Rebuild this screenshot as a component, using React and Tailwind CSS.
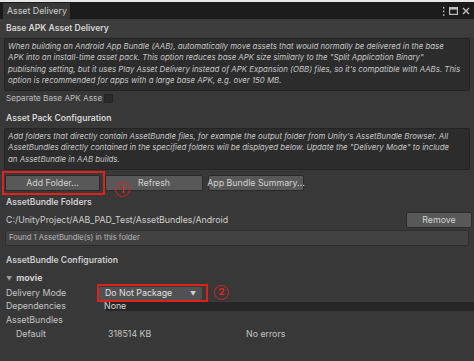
import React from "react";

const helpLines1 = [
  "When building an Android App Bundle (AAB), automatically move assets that would normally be delivered in the base",
  'APK into an install-time asset pack. This option reduces base APK size similarly to the "Split Application Binary"',
  "publishing setting, but it uses Play Asset Delivery instead of APK Expansion (OBB) files, so it's compatible with AABs. This",
  "option is recommended for apps with a large base APK, e.g. over 150 MB.",
];

const helpLines2 = [
  "Add folders that directly contain AssetBundle files, for example the output folder from Unity's AssetBundle Browser. All",
  'AssetBundles directly contained in the specified folders will be displayed below. Update the "Delivery Mode" to include',
  "an AssetBundle in AAB builds.",
];

const Btn = ({ children, className = "" }) => (
  <div
    className={`h-[16px] flex items-center justify-center whitespace-nowrap rounded-[2px] bg-[#585858] border border-[#2a2a2a] text-[8.8px] text-[#d2d2d2] ${className}`}
  >
    {children}
  </div>
);

const Help = ({ lines, className = "" }) => (
  <div
    className={`mx-[4px] bg-[#2c2c2c] border border-[#242424] rounded-[2px] px-[3px] overflow-hidden italic text-[7.85px] leading-[11.3px] text-[#c8c8c8] ${className}`}
  >
    {lines.map((l) => (
      <div key={l} className="whitespace-nowrap">
        {l}
      </div>
    ))}
  </div>
);

export default function App() {
  return (
    <div
      className="w-[474px] h-[361px] overflow-hidden bg-[#383838] text-[#c4c4c4] relative"
      style={{ fontFamily: "Inter, 'Liberation Sans', sans-serif" }}
    >
      <div className="h-[2px] bg-[#e6e6e6]" />
      {/* tab bar */}
      <div className="h-[17px] bg-[#1b1b1b] flex items-end justify-between">
        <div className="h-[16px] ml-[3px] w-[67px] bg-[#383838] text-[8.8px] whitespace-nowrap flex items-center px-[4px] text-[#cfcfcf]">
          Asset Delivery
        </div>
        <div className="flex items-center gap-[4px] pr-[4px] h-[16px] text-[#bdbdbd]">
          <svg width="3" height="9" viewBox="0 0 3 9">
            <rect x="1" y="0" width="1.4" height="1.6" fill="#bdbdbd" />
            <rect x="1" y="3.6" width="1.4" height="1.6" fill="#bdbdbd" />
            <rect x="1" y="7.2" width="1.4" height="1.6" fill="#bdbdbd" />
          </svg>
          <svg width="9" height="8" viewBox="0 0 9 8">
            <rect x="0.6" y="0.6" width="7.8" height="6.8" fill="none" stroke="#bdbdbd" strokeWidth="1.2" />
            <rect x="0.6" y="0.6" width="7.8" height="2" fill="#bdbdbd" />
          </svg>
          <svg width="8" height="8" viewBox="0 0 8 8">
            <path d="M1 1L7 7M7 1L1 7" stroke="#bdbdbd" strokeWidth="1.4" />
          </svg>
        </div>
      </div>

      {/* Base APK Asset Delivery */}
      <div className="h-[18px] bg-[#3c3c3c] flex items-center px-[6px] font-semibold text-[8.6px] text-[#d6d6d6]">
        Base APK Asset Delivery
      </div>
      <Help lines={helpLines1} className="pt-[2px] pb-[4px] mt-[1px]" />
      <div className="h-[12px] mt-[1px] flex items-center px-[6px] text-[8.2px] text-[#bdbdbd]">
        <span className="w-[98px] whitespace-nowrap">Separate Base APK Asse</span>
        <span className="w-[9px] h-[9px] bg-[#2a2a2a] border border-[#232323] rounded-[1px]" />
      </div>

      {/* Asset Pack Configuration */}
      <div className="h-[18px] mt-[5px] flex items-center px-[6px] font-semibold text-[8.6px] text-[#d6d6d6]">
        Asset Pack Configuration
      </div>
      <Help lines={helpLines2} className="pt-[2px] pb-[4px] mt-[1px]" />

      <div className="flex items-center gap-[5px] px-[5px] mt-[5px] relative">
        <Btn className="w-[95px]">Add Folder...</Btn>
        <Btn className="w-[98px]">Refresh</Btn>
        <Btn className="w-[96px]">App Bundle Summary...</Btn>
        <div className="absolute left-[2px] top-[-4px] w-[103px] h-[24px] border-2 border-[#e1221c]" />
        <div className="absolute left-[115px] top-[7px] w-[15px] h-[15px] rounded-full border-[1.5px] border-[#e1221c] text-[#e1221c] text-[9px] font-bold flex items-center justify-center">
          1
        </div>
      </div>

      <div className="h-[12px] mt-[5px] flex items-center px-[6px] font-semibold text-[8.6px] text-[#d0d0d0]">
        AssetBundle Folders
      </div>
      <div className="h-[18px] mt-[3px] flex items-center justify-between pl-[6px] pr-[2px] text-[8.8px] text-[#cfcfcf]">
        <span>C:/UnityProject/AAB_PAD_Test/AssetBundles/Android</span>
        <Btn className="w-[66px]">Remove</Btn>
      </div>
      <div className="h-[16px] mt-[1px] mx-[5px] bg-[#424242] border border-[#2e2e2e] rounded-[2px] flex items-center px-[3px] text-[7.6px] text-[#b8b8b8]">
        Found 1 AssetBundle(s) in this folder
      </div>

      <div className="h-[12px] mt-[8px] flex items-center px-[6px] font-semibold text-[8.6px] text-[#d0d0d0]">
        AssetBundle Configuration
      </div>

      <div className="h-[12px] mt-[6px] flex items-center px-[6px] font-bold text-[8.8px] text-[#d0d0d0]">
        <span className="text-[6px] mr-[4px] text-[#9a9a9a]">▼</span>movie
      </div>
      <div className="h-[14px] mt-[2px] flex items-center px-[6px] text-[8.8px] relative">
        <span className="w-[93px]">Delivery Mode</span>
        <div className="w-[103px] h-[13px] bg-[#515151] rounded-[2px] flex items-center justify-between px-[6px] text-[#e0e0e0]">
          <span>Do Not Package</span>
          <span className="text-[6px] text-[#cfcfcf]">▼</span>
        </div>
        <div className="absolute left-[97px] top-[-2px] w-[111px] h-[18px] border-2 border-[#e1221c]" />
        <div className="absolute left-[214px] top-[-1px] w-[15px] h-[15px] rounded-full border-[1.5px] border-[#e1221c] text-[#e1221c] text-[9.5px] font-bold flex items-center justify-center">
          2
        </div>
      </div>
      <div className="h-[12px] flex items-center pl-[6px] text-[8.8px]">
        <span className="w-[100px]">Dependencies</span>
        <div className="flex-1 h-[9px] bg-[#262626] flex items-center text-[#d6d6d6]">
          <span className="ml-[-2px]">None</span>
        </div>
      </div>
      <div className="h-[13px] mt-[1px] flex items-center px-[6px] text-[8.8px]">AssetBundles</div>
      <div className="h-[14px] mt-[1px] flex items-center px-[6px] text-[8.8px]">
        <span className="w-[102px] pl-[10px]">Default</span>
        <span className="w-[138px]">318514 KB</span>
        <span>No errors</span>
      </div>
    </div>
  );
}
